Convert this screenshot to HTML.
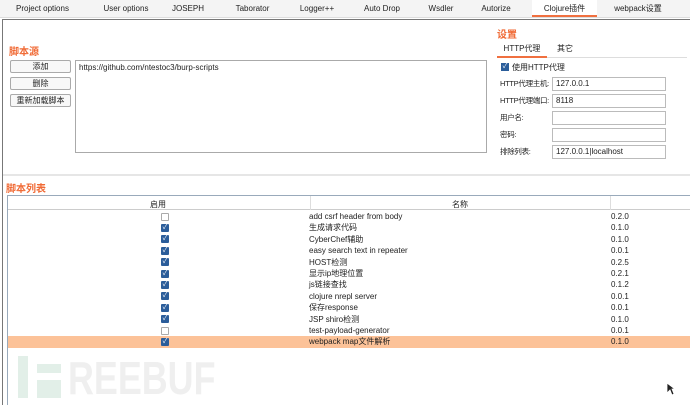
<!DOCTYPE html><html><head><meta charset="utf-8"><style>
*{box-sizing:border-box;margin:0;padding:0}
body{width:690px;height:405px;overflow:hidden;background:#fff;font-family:"Liberation Sans","Noto Sans CJK SC",sans-serif;font-size:8px;color:#222;position:relative}
.a{position:absolute}
.tab{position:absolute;top:0;height:17px;line-height:17px;font-size:8px;text-align:center}
.btn{position:absolute;left:10px;width:61px;height:13px;border:1px solid #aaa;border-radius:2px;background:#f8f8f8;text-align:center;line-height:11px;font-size:8px}
.inp{position:absolute;left:552px;width:114px;height:14px;border:1px solid #bbb;background:#fff;padding-left:3px;line-height:12px;font-size:8px}
.lbl{position:absolute;left:500px;font-size:7.5px;letter-spacing:-0.3px;line-height:14px}
.h{color:#f06a35;font-size:10px;font-weight:bold}
.row{position:absolute;left:8px;width:682px;height:11.4px;line-height:11.4px;font-size:8px}
.cb{position:absolute;left:153px;top:1.5px;width:8px;height:8px;border-radius:1px;background:#2b5d9a;color:#fff;font-size:7px;line-height:8px;text-align:center}
.cb.off{background:#fff;border:1px solid #aaa}
.nm{position:absolute;left:301px}.vr{position:absolute;left:603px}
</style></head><body>
<div class="a" style="left:0;top:0;width:690px;height:18px;background:#f4f4f4;border-bottom:1px solid #ddd"></div>
<div class="tab" style="left:5px;width:75px">Project options</div>
<div class="tab" style="left:93px;width:66px">User options</div>
<div class="tab" style="left:168px;width:40px">JOSEPH</div>
<div class="tab" style="left:225px;width:55px">Taborator</div>
<div class="tab" style="left:292px;width:50px">Logger++</div>
<div class="tab" style="left:357px;width:50px">Auto Drop</div>
<div class="tab" style="left:420px;width:42px">Wsdler</div>
<div class="tab" style="left:475px;width:42px">Autorize</div>
<div class="tab" style="left:532px;width:65px;background:#fff;border-bottom:2px solid #f07040">Clojure插件</div>
<div class="tab" style="left:607px;width:62px">webpack设置</div>
<div class="a" style="left:2px;top:19px;width:688px;height:386px;border-left:1px solid #777;border-top:1px solid #777"></div>
<div class="a h" style="left:9px;top:43px">脚本源</div>
<div class="btn" style="top:60px">添加</div>
<div class="btn" style="top:77px">删除</div>
<div class="btn" style="top:94px">重新加载脚本</div>
<div class="a" style="left:75px;top:60px;width:412px;height:93px;border:1px solid #aaa;padding:2px 3px;font-size:8px">https://github.com/ntestoc3/burp-scripts</div>
<div class="a h" style="left:497px;top:26px">设置</div>
<div class="a" style="left:497px;top:42px;width:190px;height:16px;border-bottom:1px solid #ddd"></div>
<div class="a" style="left:497px;top:42px;width:50px;height:16px;border-bottom:2px solid #f07040;text-align:center;line-height:14px">HTTP代理</div>
<div class="a" style="left:557px;top:42px;line-height:14px">其它</div>
<div class="a" style="left:501px;top:63px;width:8px;height:8px;background:#2b5d9a;color:#fff;font-size:7px;line-height:8px;text-align:center">✓</div>
<div class="a" style="left:512px;top:62px">使用HTTP代理</div>
<div class="lbl" style="top:77px">HTTP代理主机:</div><div class="inp" style="top:77px">127.0.0.1</div>
<div class="lbl" style="top:94px">HTTP代理端口:</div><div class="inp" style="top:94px">8118</div>
<div class="lbl" style="top:111px">用户名:</div><div class="inp" style="top:111px"></div>
<div class="lbl" style="top:128px">密码:</div><div class="inp" style="top:128px"></div>
<div class="lbl" style="top:145px">排除列表:</div><div class="inp" style="top:145px">127.0.0.1|localhost</div>
<div class="a" style="left:3px;top:174px;width:687px;height:2px;background:#e6e6e6"></div>
<div class="a h" style="left:6px;top:180px">脚本列表</div>
<div class="a" style="left:7px;top:195px;width:683px;height:210px;border:1px solid #9ab;border-right:none;border-bottom:none"></div>
<div class="a" style="left:8px;top:196px;width:682px;height:14px;border-bottom:1px solid #ccc;background:#fff"></div>
<div class="a" style="left:310px;top:196px;width:1px;height:14px;background:#ddd"></div>
<div class="a" style="left:610px;top:196px;width:1px;height:14px;background:#ddd"></div>
<div class="a" style="left:150px;top:199px">启用</div>
<div class="a" style="left:452px;top:199px">名称</div>
<div class="row" style="top:211px"><div class="cb off"></div><span class="nm">add csrf header from body</span><span class="vr">0.2.0</span></div>
<div class="row" style="top:222.4px"><div class="cb">✓</div><span class="nm">生成请求代码</span><span class="vr">0.1.0</span></div>
<div class="row" style="top:233.8px"><div class="cb">✓</div><span class="nm">CyberChef辅助</span><span class="vr">0.1.0</span></div>
<div class="row" style="top:245.2px"><div class="cb">✓</div><span class="nm">easy search text in repeater</span><span class="vr">0.0.1</span></div>
<div class="row" style="top:256.6px"><div class="cb">✓</div><span class="nm">HOST检测</span><span class="vr">0.2.5</span></div>
<div class="row" style="top:268px"><div class="cb">✓</div><span class="nm">显示ip地理位置</span><span class="vr">0.2.1</span></div>
<div class="row" style="top:279.4px"><div class="cb">✓</div><span class="nm">js链接查找</span><span class="vr">0.1.2</span></div>
<div class="row" style="top:290.8px"><div class="cb">✓</div><span class="nm">clojure nrepl server</span><span class="vr">0.0.1</span></div>
<div class="row" style="top:302.2px"><div class="cb">✓</div><span class="nm">保存response</span><span class="vr">0.0.1</span></div>
<div class="row" style="top:313.6px"><div class="cb">✓</div><span class="nm">JSP shiro检测</span><span class="vr">0.1.0</span></div>
<div class="row" style="top:325px"><div class="cb off"></div><span class="nm">test-payload-generator</span><span class="vr">0.0.1</span></div>
<div class="row" style="top:336.4px;background:#fcc298"><div class="cb">✓</div><span class="nm">webpack map文件解析</span><span class="vr">0.1.0</span></div>
<div class="a" style="left:18px;top:356px;width:10px;height:42px;background:#e2efe8"></div>
<div class="a" style="left:37px;top:364px;width:24px;height:9px;background:#e2efe8"></div>
<div class="a" style="left:37px;top:380px;width:24px;height:18px;background:#e2efe8"></div>
<div class="a" style="left:68px;top:355px;font-size:46px;line-height:46px;font-weight:bold;color:#efefef;transform:scaleX(0.78);transform-origin:left top">REEBUF</div>
<svg class="a" style="left:666px;top:382px" width="10" height="14"><path d="M1 1 L1 11 L4 8 L6 13 L8 12 L6 7 L9 7 Z" fill="#222" stroke="#fff" stroke-width="0.8"/></svg>
</body></html>
